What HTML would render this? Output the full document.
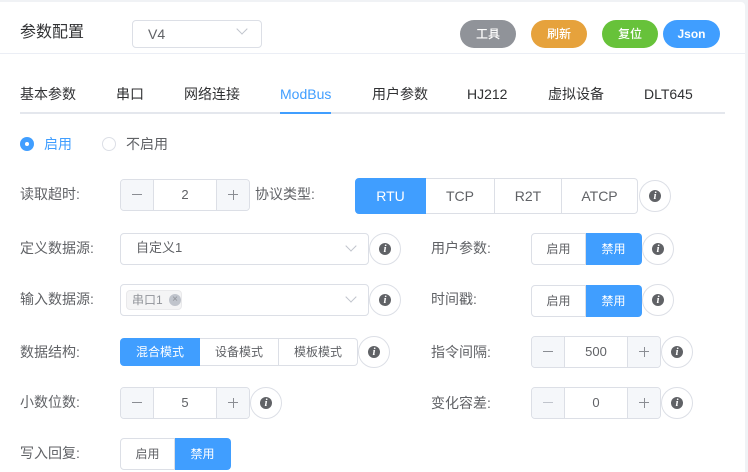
<!DOCTYPE html>
<html lang="zh">
<head>
<meta charset="utf-8">
<style>
html,body{margin:0;padding:0;width:748px;height:472px;overflow:hidden;background:#f0f2f5;}
body{font-family:"Liberation Sans","Noto Sans CJK SC",sans-serif;color:#606266;font-size:14px;position:relative;}
*{box-sizing:border-box;}
.a{position:absolute;}
#card{left:0;top:2px;width:745px;height:470px;background:#fff;border-top-right-radius:4px;}
.t{position:absolute;white-space:nowrap;line-height:20px;height:20px;}
.lb{font-size:14px;color:#606266;}
.tab{font-size:14px;color:#303133;top:84px;}
.btn{position:absolute;top:20px;height:28px;border-radius:14px;color:#fff;font-size:12px;font-weight:500;text-align:center;line-height:28px;}
.box{position:absolute;border:1px solid #dcdfe6;border-radius:4px;background:#fff;}
.num{position:absolute;width:130px;height:32px;border:1px solid #dcdfe6;border-radius:4px;background:#fff;overflow:hidden;}
.num .m,.num .p{position:absolute;top:0;width:33px;height:30px;background:#f5f7fa;}
.num .m{left:0;border-right:1px solid #dcdfe6;}
.num .p{right:0;border-left:1px solid #dcdfe6;}
.num .m::before,.num .p::before{content:"";position:absolute;left:11px;top:14px;width:10px;height:1px;background:#8a8d93;}
.num .p::after{content:"";position:absolute;left:16px;top:10px;width:1px;height:10px;background:#8a8d93;}
.num .m.dis::before{background:#c0c4cc;}
.num .v{position:absolute;left:33px;right:33px;top:0;line-height:30px;text-align:center;font-size:13px;color:#606266;}
.seg{position:absolute;display:flex;}
.seg div{height:100%;text-align:center;border:1px solid #dcdfe6;border-left:0;background:#fff;color:#606266;font-size:12px;}
.seg div:first-child{border-left:1px solid #dcdfe6;border-radius:4px 0 0 4px;}
.seg div:last-child{border-radius:0 4px 4px 0;}
.seg div.on{background:#409eff;border-color:#409eff;color:#fff;}
.info{position:absolute;width:32px;height:32px;border:1px solid #dcdfe6;border-radius:50%;background:#fff;}
.info::before{content:"";position:absolute;left:9px;top:9px;width:12px;height:12px;border-radius:50%;background:#606266;}
.info::after{content:"i";position:absolute;left:9px;top:9px;width:12px;height:12px;text-align:center;color:#fff;font:italic bold 11px/12px "Liberation Serif",serif;}
.arr{position:absolute;width:8px;height:8px;border-right:1px solid #c0c4cc;border-bottom:1px solid #c0c4cc;transform:rotate(45deg);}
</style>
</head>
<body>
<div id="card" class="a"></div>
<div class="a" style="left:0;top:53px;width:745px;height:1px;background:#ebeef5"></div>

<div class="t" style="left:20px;top:23px;font-size:16px;color:#303133">参数配置</div>
<div class="box" style="left:132px;top:20px;width:130px;height:28px"></div>
<div class="t" style="left:148px;top:24px;font-size:14px">V4</div>
<div class="arr" style="left:238px;top:25px"></div>

<div class="btn" style="left:460px;width:56px;background:#909399">工具</div>
<div class="btn" style="left:531px;width:56px;background:#e6a23c">刷新</div>
<div class="btn" style="left:602px;width:56px;background:#67c23a">复位</div>
<div class="btn" style="left:663px;width:57px;background:#409eff;font-weight:bold">Json</div>

<div class="t tab" style="left:20px">基本参数</div>
<div class="t tab" style="left:116px">串口</div>
<div class="t tab" style="left:184px">网络连接</div>
<div class="t tab" style="left:280px;color:#409eff">ModBus</div>
<div class="t tab" style="left:372px">用户参数</div>
<div class="t tab" style="left:467px">HJ212</div>
<div class="t tab" style="left:548px">虚拟设备</div>
<div class="t tab" style="left:644px">DLT645</div>
<div class="a" style="left:20px;top:112px;width:705px;height:2px;background:#e4e7ed"></div>
<div class="a" style="left:280px;top:112px;width:51px;height:2px;background:#409eff"></div>

<div class="a" style="left:20px;top:137px;width:14px;height:14px;border-radius:50%;background:#409eff"></div>
<div class="a" style="left:25px;top:142px;width:4px;height:4px;border-radius:50%;background:#fff"></div>
<div class="t" style="left:44px;top:134px;font-size:14px;color:#409eff">启用</div>
<div class="a" style="left:102px;top:137px;width:14px;height:14px;border-radius:50%;border:1px solid #dcdfe6;background:#fff"></div>
<div class="t" style="left:126px;top:134px;font-size:14px">不启用</div>

<div class="t lb" style="left:20px;top:184px">读取超时:</div>
<div class="num" style="left:120px;top:179px"><div class="m"></div><div class="v">2</div><div class="p"></div></div>
<div class="t lb" style="left:255px;top:184px">协议类型:</div>
<div class="seg" style="left:355px;top:178px;height:36px;line-height:34px">
<div class="on" style="width:71px;font-size:14px">RTU</div><div style="width:69px;font-size:14px">TCP</div><div style="width:67px;font-size:14px">R2T</div><div style="width:76px;font-size:14px">ATCP</div>
</div>
<div class="info" style="left:639px;top:180px"></div>

<div class="t lb" style="left:20px;top:238px">定义数据源:</div>
<div class="box" style="left:120px;top:233px;width:249px;height:32px"></div>
<div class="t" style="left:136px;top:238px;font-size:13px">自定义1</div>
<div class="arr" style="left:347px;top:242px"></div>
<div class="info" style="left:369px;top:233px"></div>
<div class="t lb" style="left:431px;top:238px">用户参数:</div>
<div class="seg" style="left:531px;top:233px;height:32px;line-height:30px"><div style="width:55px">启用</div><div class="on" style="width:56px">禁用</div></div>
<div class="info" style="left:642px;top:233px"></div>

<div class="t lb" style="left:20px;top:289px">输入数据源:</div>
<div class="box" style="left:120px;top:284px;width:249px;height:32px"></div>
<div class="a" style="left:126px;top:290px;width:56px;height:20px;background:#f4f4f5;border:1px solid #e9e9eb;border-radius:4px"></div>
<div class="t" style="left:132px;top:290px;font-size:12px;color:#909399">串口1</div>
<div class="a" style="left:169px;top:294px;width:12px;height:12px;border-radius:50%;background:#c0c4cc;color:#909399;font-size:10px;line-height:12px;text-align:center">×</div>
<div class="arr" style="left:347px;top:293px"></div>
<div class="info" style="left:369px;top:284px"></div>
<div class="t lb" style="left:431px;top:289px">时间戳:</div>
<div class="seg" style="left:531px;top:285px;height:32px;line-height:30px"><div style="width:55px">启用</div><div class="on" style="width:56px">禁用</div></div>
<div class="info" style="left:642px;top:284px"></div>

<div class="t lb" style="left:20px;top:342px">数据结构:</div>
<div class="seg" style="left:120px;top:338px;height:28px;line-height:26px"><div class="on" style="width:80px">混合模式</div><div style="width:79px">设备模式</div><div style="width:79px">模板模式</div></div>
<div class="info" style="left:358px;top:336px"></div>
<div class="t lb" style="left:431px;top:342px">指令间隔:</div>
<div class="num" style="left:531px;top:336px"><div class="m"></div><div class="v">500</div><div class="p"></div></div>
<div class="info" style="left:661px;top:336px"></div>

<div class="t lb" style="left:20px;top:392px">小数位数:</div>
<div class="num" style="left:120px;top:387px"><div class="m"></div><div class="v">5</div><div class="p"></div></div>
<div class="info" style="left:250px;top:387px"></div>
<div class="t lb" style="left:431px;top:393px">变化容差:</div>
<div class="num" style="left:531px;top:387px"><div class="m dis"></div><div class="v">0</div><div class="p"></div></div>
<div class="info" style="left:661px;top:387px"></div>

<div class="t lb" style="left:20px;top:443px">写入回复:</div>
<div class="seg" style="left:120px;top:438px;height:32px;line-height:30px"><div style="width:55px">启用</div><div class="on" style="width:56px">禁用</div></div>
</body>
</html>
